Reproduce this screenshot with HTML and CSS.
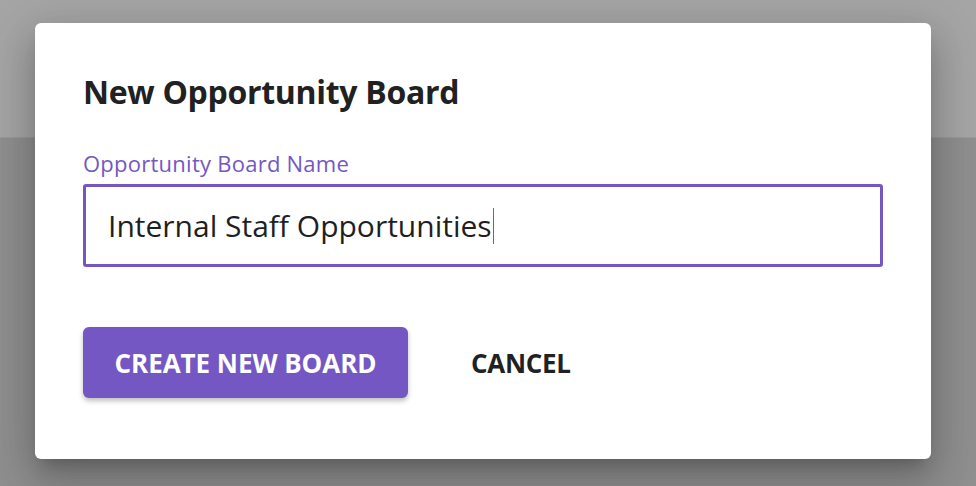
FILE: index.html
```
<!DOCTYPE html>
<html lang="en">
<head>
    <meta charset="UTF-8">
    <meta name="viewport" content="width=device-width, initial-scale=1.0">
    <title>New Opportunity Board</title>
    <link rel="stylesheet" href="styles.css">
</head>
<body>

<div class="page">
    <div class="page-header"></div>
    <div class="page-body"></div>
</div>

<div class="backdrop">
    <div class="dialog">
        <h2 class="dialog-title">New Opportunity Board</h2>
        <label class="field-label" for="boardName">Opportunity Board Name</label>
        <div class="field-box">
            <span class="field-value">Internal Staff Opportunities</span><span class="caret"></span>
        </div>
        <div class="dialog-actions">
            <button class="btn btn-primary">Create New Board</button>
            <button class="btn btn-text">Cancel</button>
        </div>
    </div>
</div>

</body>
</html>
```

FILE: styles.css
```
body {
    margin: 0;
    font-family: "Open Sans", "Noto Sans", sans-serif;
    background: #8f8f8f;
    height: 486px;
    overflow: hidden;
}
.page {
    display: flex;
    flex-direction: column;
    height: 100%;
}
.page-header {
    height: 137px;
    background: #a5a5a5;
    border-bottom: 1px solid #999;
}
.page-body {
    flex: 1;
    background: #8f8f8f;
}
.backdrop {
    position: absolute;
    top: 0;
    left: 0;
    right: 0;
    bottom: 0;
    padding: 23px 45px 0 35px;
}
.dialog {
    background: #fff;
    border-radius: 6px;
    width: 896px;
    height: 436px;
    box-sizing: border-box;
    padding: 53px 48px 0 48px;
    box-shadow: 0 11px 15px -7px rgba(0,0,0,0.2), 0 24px 38px 3px rgba(0,0,0,0.14), 0 9px 46px 8px rgba(0,0,0,0.12);
}
.dialog-title {
    margin: 0;
    font-size: 32px;
    line-height: 1;
    font-weight: 700;
    color: #212121;
    letter-spacing: -0.3px;
}
.field-label {
    display: block;
    margin-top: 44px;
    font-size: 22px;
    line-height: 1;
    color: #7557c4;
    letter-spacing: 0.25px;
}
.field-box {
    margin-top: 10px;
    height: 83px;
    box-sizing: border-box;
    border: 3px solid #7557c4;
    border-radius: 3px;
    padding: 0 22px;
    display: flex;
    align-items: center;
}
.field-value {
    font-size: 30px;
    color: #1f1f1f;
    letter-spacing: 0;
}
.caret {
    display: inline-block;
    width: 1.5px;
    height: 36px;
    background: #7557c4;
    margin-left: 1px;
}
.dialog-actions {
    display: flex;
    align-items: center;
    gap: 63px;
    margin-top: 60px;
}
.btn {
    font-family: inherit;
    font-size: 26px;
    font-weight: 700;
    text-transform: uppercase;
    border: none;
    cursor: pointer;
    letter-spacing: -0.3px;
}
.btn-primary {
    background: #7557c4;
    color: #fff;
    height: 71px;
    width: 325px;
    border-radius: 6px;
    box-shadow: 0 3px 5px rgba(0,0,0,0.25);
    letter-spacing: -0.05px;
}
.btn-text {
    background: none;
    color: #212121;
    padding: 0;
}
```
